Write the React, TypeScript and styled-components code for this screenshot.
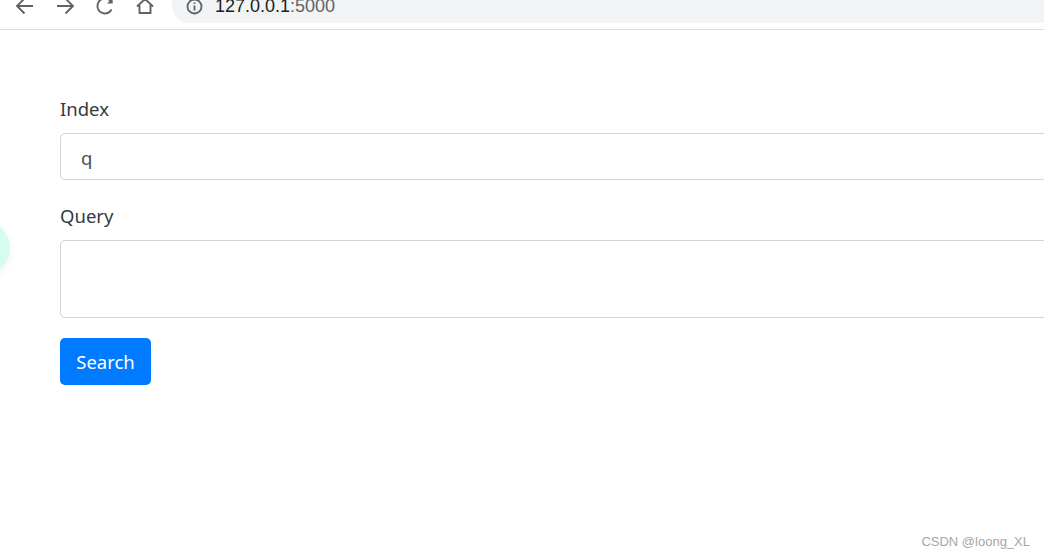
import React from 'react'
import styled, { createGlobalStyle } from 'styled-components'

const GlobalStyle = createGlobalStyle`
  html, body {
    margin: 0;
    padding: 0;
    background: #fff;
  }
  body {
    width: 1044px;
    height: 558px;
    overflow: hidden;
    font-family: "Noto Sans", "Open Sans", sans-serif;
  }
`

const Page = styled.div`
  position: relative;
  width: 1044px;
  height: 558px;
  overflow: hidden;
`

const Toolbar = styled.div`
  display: flex;
  align-items: flex-start;
  height: 29px;
  border-bottom: 1px solid #dcdcde;
  overflow: hidden;
`

const NavIcons = styled.div`
  display: flex;
  gap: 18px;
  padding-left: 14px;
  width: 172px;
  box-sizing: border-box;
  flex: none;
`

const NavIcon = styled.svg`
  width: 22px;
  height: 22px;
  margin-top: -5px;
  flex: none;
  fill: none;
  stroke: #5f6368;
  stroke-width: 1.9;
`

const AddressBar = styled.div`
  flex: 1;
  display: flex;
  align-items: center;
  gap: 12px;
  height: 36px;
  margin-top: -13px;
  padding: 3px 0 0 14px;
  box-sizing: border-box;
  background: #f1f3f4;
  border-radius: 18px 0 0 18px;
`

const InfoIcon = styled.svg`
  width: 17px;
  height: 17px;
  flex: none;
  fill: none;
  stroke: #5f6368;
  stroke-width: 1.8;
`

const Url = styled.div`
  font-family: "Liberation Sans", Arial, sans-serif;
  font-size: 18px;
  color: #202124;
`

const Port = styled.span`
  color: #5f6368;
`

const Form = styled.form`
  display: flex;
  flex-direction: column;
  align-items: flex-start;
  padding: 65px 0 0 60px;
`

const Field = styled.div`
  display: flex;
  flex-direction: column;

  & + & {
    margin-top: 22px;
  }
`

const Label = styled.label`
  font-size: 18.5px;
  line-height: 28px;
  color: #343a40;
  margin-bottom: 10px;
`

const TextInput = styled.div<{ $height: number }>`
  width: 1100px;
  height: ${p => p.$height}px;
  box-sizing: border-box;
  border: 1px solid #ced4da;
  border-radius: 5px;
  background: #fff;
  padding: 0 20px;
  font-size: 18.5px;
  line-height: 47px;
  color: #495057;
`

const SearchButton = styled.button`
  width: 91px;
  height: 47px;
  margin-top: 20px;
  padding: 0;
  border: none;
  border-radius: 5px;
  background: #007bff;
  color: #fff;
  font-family: inherit;
  font-size: 18.5px;
`

const Bubble = styled.div`
  position: absolute;
  left: -44px;
  top: 221px;
  width: 54px;
  height: 54px;
  border-radius: 50%;
  background: #d5fdef;
  box-shadow: 0 2px 8px rgba(0, 0, 0, 0.06);
`

const Watermark = styled.div`
  position: absolute;
  right: 14px;
  bottom: 9px;
  font-family: "Liberation Sans", Arial, sans-serif;
  font-size: 13px;
  color: #a6a6a6;
`

export default function App() {
  return (
    <Page>
      <GlobalStyle />
      <Toolbar>
        <NavIcons>
          <NavIcon viewBox="0 0 22 22">
            <path d="M19 11H3.5M10.5 3.5 3 11l7.5 7.5" />
          </NavIcon>
          <NavIcon viewBox="0 0 22 22">
            <path d="M3 11h15.5M11.5 3.5 19 11l-7.5 7.5" />
          </NavIcon>
          <NavIcon viewBox="0 0 22 22">
            <path d="M17.6 14.5A7.5 7.5 0 1 1 16.4 5.8L18 7.6" />
            <path d="M18.6 3v5.6H13" fill="#5f6368" stroke="none" />
          </NavIcon>
          <NavIcon viewBox="0 0 22 22">
            <path d="M3 11.5 11 4l8 7.5M5.5 10v8h11v-8" />
          </NavIcon>
        </NavIcons>
        <AddressBar>
          <InfoIcon viewBox="0 0 17 17">
            <circle cx="8.5" cy="8.5" r="7" />
            <path d="M8.5 7.5v5M8.5 4.5v1.6" />
          </InfoIcon>
          <Url>
            127.0.0.1<Port>:5000</Port>
          </Url>
        </AddressBar>
      </Toolbar>
      <Form onSubmit={e => e.preventDefault()}>
        <Field>
          <Label>Index</Label>
          <TextInput $height={47}>q</TextInput>
        </Field>
        <Field>
          <Label>Query</Label>
          <TextInput $height={78} />
        </Field>
        <SearchButton type="submit">Search</SearchButton>
      </Form>
      <Bubble />
      <Watermark>CSDN @loong_XL</Watermark>
    </Page>
  )
}
